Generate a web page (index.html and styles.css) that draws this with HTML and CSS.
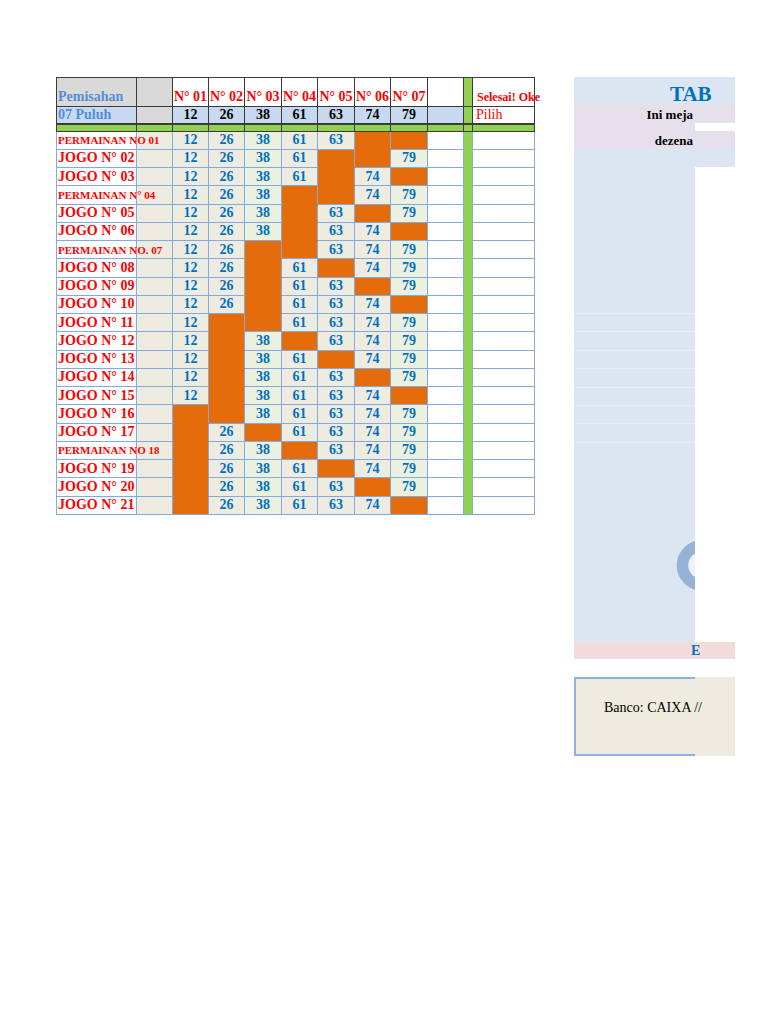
FILE: index.html
```html
<!DOCTYPE html>
<html lang="pt">
<head>
<meta charset="utf-8">
<title>Tabela de dezenas</title>
<link rel="stylesheet" href="styles.css">
</head>
<body>
<div class="page">
  <table class="sheet">
    <colgroup>
      <col class="w80"><col class="w36"><col class="w36"><col class="w36"><col class="w37"><col class="w36"><col class="w37"><col class="w36"><col class="w37"><col class="w36"><col class="w9"><col class="w62">
    </colgroup>
    <thead>
      <tr class="h1">
        <th class="lab gray blue-t">Pemisahan</th>
        <th class="gray"></th>
        <th class="red-t">N° 01</th>
        <th class="red-t">N° 02</th>
        <th class="red-t">N° 03</th>
        <th class="red-t">N° 04</th>
        <th class="red-t">N° 05</th>
        <th class="red-t">N° 06</th>
        <th class="red-t">N° 07</th>
        <th></th>
        <th class="g"></th>
        <th class="lab done">Selesai! Oke</th>
      </tr>
      <tr class="h2">
        <th class="lab lb blue-t">07 Puluh</th>
        <th class="gray"></th>
        <th class="lb">12</th>
        <th class="lb">26</th>
        <th class="lb">38</th>
        <th class="lb">61</th>
        <th class="lb">63</th>
        <th class="lb">74</th>
        <th class="lb">79</th>
        <th class="lb"></th>
        <th class="g"></th>
        <th class="lab pick">Pilih</th>
      </tr>
      <tr class="gr">
        <td></td><td></td><td></td><td></td><td></td><td></td><td></td><td></td><td></td><td></td><td></td><td></td>
      </tr>
    </thead>
    <tbody>
      <tr><td class="lab sm">PERMAINAN NO 01</td><td class="b"></td><td class="n">12</td><td class="n">26</td><td class="n t">38</td><td class="n">61</td><td class="n">63</td><td class="o ob"></td><td class="o"></td><td class="e"></td><td class="g"></td><td class="k"></td></tr>
      <tr><td class="lab">JOGO N° 02</td><td class="b"></td><td class="n">12</td><td class="n">26</td><td class="n t">38</td><td class="n">61</td><td class="o ob"></td><td class="o"></td><td class="n t">79</td><td class="e"></td><td class="g"></td><td class="k"></td></tr>
      <tr><td class="lab">JOGO N° 03</td><td class="b"></td><td class="n">12</td><td class="n">26</td><td class="n t">38</td><td class="n">61</td><td class="o ob"></td><td class="n">74</td><td class="o"></td><td class="e"></td><td class="g"></td><td class="k"></td></tr>
      <tr><td class="lab sm">PERMAINAN N° 04</td><td class="b"></td><td class="n">12</td><td class="n">26</td><td class="n t">38</td><td class="o ob"></td><td class="o"></td><td class="n">74</td><td class="n t">79</td><td class="e"></td><td class="g"></td><td class="k"></td></tr>
      <tr><td class="lab">JOGO N° 05</td><td class="b"></td><td class="n">12</td><td class="n">26</td><td class="n t">38</td><td class="o ob"></td><td class="n">63</td><td class="o"></td><td class="n t">79</td><td class="e"></td><td class="g"></td><td class="k"></td></tr>
      <tr><td class="lab">JOGO N° 06</td><td class="b"></td><td class="n">12</td><td class="n">26</td><td class="n t">38</td><td class="o ob"></td><td class="n">63</td><td class="n">74</td><td class="o"></td><td class="e"></td><td class="g"></td><td class="k"></td></tr>
      <tr><td class="lab sm">PERMAINAN NO. 07</td><td class="b"></td><td class="n">12</td><td class="n">26</td><td class="o ob"></td><td class="o"></td><td class="n">63</td><td class="n">74</td><td class="n t">79</td><td class="e"></td><td class="g"></td><td class="k"></td></tr>
      <tr><td class="lab">JOGO N° 08</td><td class="b"></td><td class="n">12</td><td class="n">26</td><td class="o ob"></td><td class="n">61</td><td class="o"></td><td class="n">74</td><td class="n t">79</td><td class="e"></td><td class="g"></td><td class="k"></td></tr>
      <tr><td class="lab">JOGO N° 09</td><td class="b"></td><td class="n">12</td><td class="n">26</td><td class="o ob"></td><td class="n">61</td><td class="n">63</td><td class="o"></td><td class="n t">79</td><td class="e"></td><td class="g"></td><td class="k"></td></tr>
      <tr><td class="lab">JOGO N° 10</td><td class="b"></td><td class="n">12</td><td class="n">26</td><td class="o ob"></td><td class="n">61</td><td class="n">63</td><td class="n">74</td><td class="o"></td><td class="e"></td><td class="g"></td><td class="k"></td></tr>
      <tr><td class="lab">JOGO N° 11</td><td class="b"></td><td class="n">12</td><td class="o ob"></td><td class="o"></td><td class="n">61</td><td class="n">63</td><td class="n">74</td><td class="n t">79</td><td class="e"></td><td class="g"></td><td class="k"></td></tr>
      <tr><td class="lab">JOGO N° 12</td><td class="b"></td><td class="n">12</td><td class="o ob"></td><td class="n t">38</td><td class="o"></td><td class="n">63</td><td class="n">74</td><td class="n t">79</td><td class="e"></td><td class="g"></td><td class="k"></td></tr>
      <tr><td class="lab">JOGO N° 13</td><td class="b"></td><td class="n">12</td><td class="o ob"></td><td class="n t">38</td><td class="n">61</td><td class="o"></td><td class="n">74</td><td class="n t">79</td><td class="e"></td><td class="g"></td><td class="k"></td></tr>
      <tr><td class="lab">JOGO N° 14</td><td class="b"></td><td class="n">12</td><td class="o ob"></td><td class="n t">38</td><td class="n">61</td><td class="n">63</td><td class="o"></td><td class="n t">79</td><td class="e"></td><td class="g"></td><td class="k"></td></tr>
      <tr><td class="lab">JOGO N° 15</td><td class="b"></td><td class="n">12</td><td class="o ob"></td><td class="n t">38</td><td class="n">61</td><td class="n">63</td><td class="n">74</td><td class="o"></td><td class="e"></td><td class="g"></td><td class="k"></td></tr>
      <tr><td class="lab">JOGO N° 16</td><td class="b"></td><td class="o ob"></td><td class="o"></td><td class="n t">38</td><td class="n">61</td><td class="n">63</td><td class="n">74</td><td class="n t">79</td><td class="e"></td><td class="g"></td><td class="k"></td></tr>
      <tr><td class="lab">JOGO N° 17</td><td class="b"></td><td class="o ob"></td><td class="n">26</td><td class="o"></td><td class="n">61</td><td class="n">63</td><td class="n">74</td><td class="n t">79</td><td class="e"></td><td class="g"></td><td class="k"></td></tr>
      <tr><td class="lab sm">PERMAINAN NO 18</td><td class="b"></td><td class="o ob"></td><td class="n">26</td><td class="n t">38</td><td class="o"></td><td class="n">63</td><td class="n">74</td><td class="n t">79</td><td class="e"></td><td class="g"></td><td class="k"></td></tr>
      <tr><td class="lab">JOGO N° 19</td><td class="b"></td><td class="o ob"></td><td class="n">26</td><td class="n t">38</td><td class="n">61</td><td class="o"></td><td class="n">74</td><td class="n t">79</td><td class="e"></td><td class="g"></td><td class="k"></td></tr>
      <tr><td class="lab">JOGO N° 20</td><td class="b"></td><td class="o ob"></td><td class="n">26</td><td class="n t">38</td><td class="n">61</td><td class="n">63</td><td class="o"></td><td class="n t">79</td><td class="e"></td><td class="g"></td><td class="k"></td></tr>
      <tr class="last"><td class="lab">JOGO N° 21</td><td class="b"></td><td class="o"></td><td class="n">26</td><td class="n t">38</td><td class="n">61</td><td class="n">63</td><td class="n">74</td><td class="o"></td><td class="e"></td><td class="g"></td><td class="k"></td></tr>
    </tbody>
  </table>

  <aside class="panel">
    <div class="p-title">TAB</div>
    <div class="p-row lav">Ini meja</div>
    <div class="p-notch"></div>
    <div class="p-row lav">dezena</div>
    <div class="p-row sky"></div>
    <div class="p-body">
      <div class="p-line"></div><div class="p-line"></div><div class="p-line"></div><div class="p-line"></div>
      <div class="p-line"></div><div class="p-line"></div><div class="p-line"></div><div class="p-line"></div>
      <svg class="ring" width="60" height="60" viewBox="0 0 60 60" aria-hidden="true">
        <circle cx="28" cy="28.3" r="19.5" fill="#edf2f9" stroke="#95b3d7" stroke-width="11.6"/>
      </svg>
    </div>
    <div class="p-pink">E</div>
    <div class="bank">
      <div class="bank-in">Banco: CAIXA //</div>
    </div>
  </aside>
</div>
</body>
</html>
```

FILE: styles.css
```css
* { box-sizing: border-box; }

html, body {
  margin: 0;
  background: #ffffff;
}

body {
  font-family: "Liberation Serif", "Times New Roman", serif;
  color: #000;
}

.page {
  display: flex;
  align-items: flex-start;
  gap: 39px;
  width: 768px;
  height: 1024px;
  padding: 77px 0 0 56px;
  overflow: hidden;
}

/* ---------- spreadsheet ---------- */
.sheet {
  border-collapse: collapse;
  table-layout: fixed;
  width: 478px;
  flex: none;
  font-size: 14px;
  line-height: 16px;
  font-weight: bold;
}

.w80 { width: 80px; }
.w36 { width: 36px; }
.w37 { width: 37px; }
.w9  { width: 9px; }
.w62 { width: 62px; }

.sheet th,
.sheet td {
  padding: 0;
  white-space: nowrap;
  overflow: visible;
  text-align: center;
  vertical-align: middle;
  border: 1px solid #82aae0;
  background: #ffffff;
  font-weight: bold;
}

/* header */
.sheet thead th,
.sheet thead td {
  border-color: #3a3a3a;
}

.h1 { height: 28.5px; }
.h1 th { vertical-align: bottom; padding-bottom: 1px; }
.h2 { height: 18px; }
.h2 th { border-bottom: 2px solid #2a2a2a; }
.gr { height: 7px; }
.gr td {
  background: #92d050;
  border-bottom-color: #82aae0;
}

.lab { text-align: left !important; padding-left: 1px !important; }
.gray { background: #d9d9d9 !important; }
.lb { background: #c6d9f1 !important; color: #000; }
.blue-t { color: #558ed5; }
.red-t { color: #ff0000; }
.done { color: #ff0000; font-size: 12px; padding-left: 4px !important; }
.pick { color: #ff0000; font-weight: normal !important; padding-left: 3px !important; }

/* body rows */
.sheet tbody tr { height: 18.25px; }
.sheet tbody .lab { color: #ff0000; }
.sheet tbody .lab.sm { font-size: 11px; }
.b { background: #eeece1 !important; }
.n { background: #eeece1 !important; color: #0070c0; }
.n.t { background: #ebf1de !important; }
.o { background: #e46c0a !important; }
.o.ob { border-bottom-color: #e46c0a; }
.e, .k { background: #ffffff; }
.g { background: #92d050 !important; }
.sheet tbody .g { border-bottom-color: #92d050; }
.sheet tbody .last .g { border-bottom-color: #82aae0; }

/* ---------- right panel ---------- */
.panel {
  width: 161px;
  flex: none;
  display: flex;
  flex-direction: column;
  font-weight: bold;
}

.p-title {
  height: 28px;
  background: #dce6f2;
  color: #0070c0;
  font-size: 21px;
  line-height: 24px;
  padding: 5px 0 0 96px;
}

.p-row {
  height: 18px;
  font-size: 13px;
  line-height: 18px;
  text-align: right;
  padding: 1px 42px 0 0;
}

.lav { background: #e5e0ec; }
.sky { background: #dce6f2; }

.p-notch {
  height: 8px;
  width: 121px;
  background: #e5e0ec;
}

.p-body {
  position: relative;
  width: 121px;
  height: 475px;
  background: #dce6f2;
  overflow: hidden;
  padding-top: 146px;
  display: flex;
  flex-direction: column;
}

.p-line {
  height: 18.4px;
  border-top: 1px solid #e6edf6;
  flex: none;
}

.ring {
  position: absolute;
  left: 100px;
  top: 370px;
}

.p-pink {
  height: 17px;
  background: #f2dcdb;
  color: #0070c0;
  font-size: 14px;
  line-height: 18px;
  padding-left: 117px;
}

.bank {
  margin-top: 18px;
  height: 79px;
  background: #eeece1;
  display: flex;
}

.bank-in {
  width: 121px;
  height: 79px;
  border: 2px solid #8db3e2;
  border-right: none;
  padding: 21px 0 0 28px;
  font-weight: normal;
  font-size: 14px;
  line-height: 16px;
  white-space: nowrap;
}
```
